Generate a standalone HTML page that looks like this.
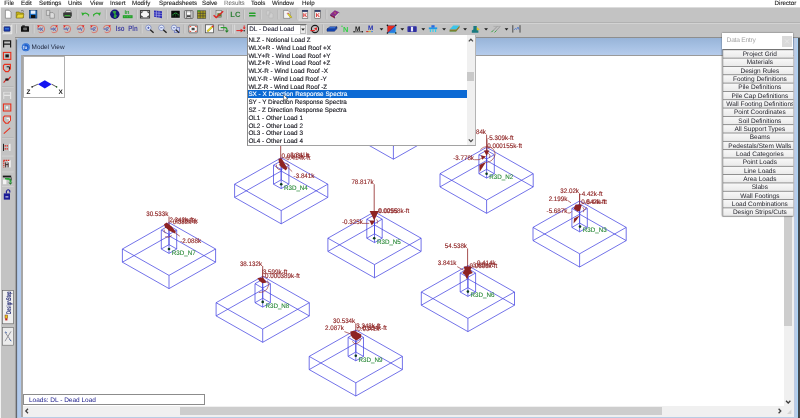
<!DOCTYPE html>
<html lang="en"><head><meta charset="utf-8"><title>Model View</title>
<style>
html,body{margin:0;padding:0}
body{text-rendering:geometricPrecision;width:800px;height:418px;overflow:hidden;position:relative;background:#c3c3c3;font-family:"Liberation Sans",sans-serif;font-size:6.3px;color:#222}
#root{position:absolute;left:0;top:0;width:800px;height:418px;overflow:hidden;will-change:transform}
.abs{position:absolute}
#menubar{left:0;top:0;width:800px;height:7px;background:#fff;overflow:hidden}
#menubar span{position:absolute;top:-0.2px;font-size:6.2px;line-height:8px;color:#2a2a2a;-webkit-text-stroke:0.12px #2a2a2a;white-space:nowrap}
#tb{left:0;top:7px;width:800px;height:30px;background:#c3c3c3}
#tbhi{left:0;top:7px;width:800px;height:1px;background:#dcdcdc}
#tbsep{left:2px;top:21.5px;width:798px;height:1px;background:#b2b2b2}
#tbsep2{left:2px;top:22.5px;width:798px;height:1px;background:#d2d2d2}
#tbshadow{left:15px;top:36.5px;width:785px;height:1.2px;background:#8e8e8e}
#lefttb{left:0;top:37px;width:15.5px;height:381px;background:#c3c3c3}
#leftedge{left:0;top:7px;width:1.2px;height:411px;background:#f2f2f2}
#mdi{left:17.1px;top:37.6px;width:781.2px;height:381px;background:#b2caec;border-radius:2px 0 0 0}
#title{left:17.1px;top:37.6px;width:781.2px;height:17.2px;background:linear-gradient(#98b4d8,#a4bfe2 45%,#b6ccec);border-radius:3px 0 0 0}
#titletxt{left:31.6px;top:43.2px;font-size:6.4px;line-height:9px;color:#1a2238;white-space:nowrap}
#content{left:23px;top:55.6px;width:770.5px;height:361px;background:#fff}
#contenttop{left:22.5px;top:54.7px;width:771px;height:1px;background:#9a9a9a}
#contentleft{left:20.8px;top:54.7px;width:2.2px;height:362.2px;background:#a6a6a6}
#rightdark{left:798.2px;top:37.6px;width:2px;height:381px;background:linear-gradient(90deg,#3c4650,#4c4c4c)}
#rightblue{left:793.8px;top:37.6px;width:4.5px;height:381px;background:linear-gradient(90deg,#c4c8dc 0,#b8cce8 22%,#b8cce8 74%,#a8d4f8 80%,#a8d4f8 100%)}
#bottomblue{left:17.1px;top:416.8px;width:781px;height:2px;background:#b8cce4}
#axes{left:22.6px;top:55.6px;width:40.7px;height:40px;background:#fff;border:0.8px solid #b0b0b0}
#status{left:23.4px;top:394.3px;width:182px;height:11.1px;background:#fff;border:0.8px solid #8c8c8c;box-sizing:border-box}
#status span{position:absolute;left:4.6px;top:2.2px;font-size:6.5px;line-height:8px;color:#20208c;white-space:nowrap}
#hscroll{left:23px;top:406.2px;width:771px;height:10.6px;background:#f0f0f0}
#hthumb{left:180.4px;top:406.9px;width:481.6px;height:7.9px;background:#cdcdcd}
#vscroll{left:784.2px;top:55.6px;width:9.6px;height:361px;background:#f0f0f0}
#vthumb{left:784.2px;top:63px;width:8.2px;height:263px;background:#cdcdcd}
#dd{left:246.6px;top:35.2px;width:229.2px;height:110.4px;background:#fff;border-left:0.8px solid #8a8a8a;border-right:1px solid #b4b4b4;border-top:0 solid #fff;border-bottom:1px solid #a2a2a2;box-sizing:border-box;overflow:hidden}
#dd .it{position:absolute;left:0.6px;width:218.8px;height:7.8px;line-height:9.6px;font-size:6.34px;color:#14141c;-webkit-text-stroke:0.12px #14141c;overflow:hidden;white-space:nowrap;padding-left:0.2px;box-sizing:border-box}
#dd .sel{background:#0c6ad4;color:#fff;-webkit-text-stroke:0.12px #fff}
#ddsb{left:467px;top:35.4px;width:7.8px;height:109.2px;background:#f0f0f0}
#ddth{left:467px;top:72px;width:7px;height:9px;background:#c9c9c9}
#combo{left:246.8px;top:24.2px;width:60.2px;height:10.6px;background:#fff;border-top:1px solid #6e6e6e;border-left:1px solid #6e6e6e;border-bottom:0.6px solid #e8e8e8;border-right:0.6px solid #e8e8e8;box-sizing:border-box}
#combo span{position:absolute;left:1.4px;top:1.2px;font-size:6.4px;line-height:8px;color:#1c1c30;-webkit-text-stroke:0.1px #1c1c30;white-space:nowrap}
#combobtn{left:299.8px;top:25.4px;width:6.4px;height:8.6px;background:#ececec;border:0.5px solid #bdbdbd;box-sizing:border-box}
#deshadow{left:722px;top:32.8px;width:71.4px;height:183.6px;box-shadow:0 0 1.6px rgba(0,0,0,.55)}
#de{left:721.8px;top:32.7px;width:71.6px;height:16.4px;background:#fff}
#de span{position:absolute;left:4.8px;top:4.6px;font-size:6.7px;letter-spacing:-0.27px;line-height:8px;color:#a4a4a4;white-space:nowrap}
#declose{left:781.8px;top:36px;width:10.4px;height:10.8px;background:#dadada}
#debtns{left:722.4px;top:49.4px;width:71px;height:167px;overflow:hidden}
#debtns div{position:absolute;left:0.9px;width:70.1px;height:8.3px;font-size:6.5px;line-height:9.6px;text-align:center;color:#26262e;white-space:nowrap;overflow:hidden;box-sizing:border-box;padding-left:3px}
svg{position:absolute;left:0;top:0;overflow:hidden}
svg text{font-family:"Liberation Sans",sans-serif;text-rendering:geometricPrecision}
</style></head>
<body>
<div id="root">
<div id="menubar" class="abs"><span style="left:4.3px">File</span><span style="left:21px">Edit</span><span style="left:39px">Settings</span><span style="left:68px">Units</span><span style="left:90px">View</span><span style="left:110px">Insert</span><span style="left:132px">Modify</span><span style="left:159px">Spreadsheets</span><span style="left:202px">Solve</span><span style="left:224px;color:#aaa">Results</span><span style="left:251px">Tools</span><span style="left:272px">Window</span><span style="left:302px">Help</span><span style="left:774.6px">Director</span></div>
<div id="tb" class="abs"></div><div id="tbhi" class="abs"></div><div id="tbsep" class="abs"></div><div id="tbsep2" class="abs"></div>
<div id="lefttb" class="abs"></div><div id="leftedge" class="abs"></div>
<div id="mdi" class="abs"></div><div id="title" class="abs"></div>
<div id="tbshadow" class="abs"></div>
<div id="titletxt" class="abs">Model View</div>
<div id="content" class="abs"></div><div id="contenttop" class="abs"></div><div id="contentleft" class="abs"></div>
<div id="rightblue" class="abs"></div><div id="rightdark" class="abs"></div>
<div id="axes" class="abs"></div>
<div id="vscroll" class="abs"></div><div id="vthumb" class="abs"></div>
<div id="hscroll" class="abs"></div><div id="hthumb" class="abs"></div>
<div id="bottomblue" class="abs"></div>
<div id="status" class="abs"><span>Loads: DL - Dead Load</span></div>
<svg width="800" height="418" viewBox="0 0 800 418">
<g><path d="M37.9 84.3L44.8 80.2L51.7 84.3L44.8 88.4Z" fill="#1414f0"/><path d="M37.9 84.2L32.2 86.8M51.7 84.2L56.4 86.8" stroke="#111" stroke-width="0.7" fill="none"/><circle cx="32.1" cy="86.9" r="0.8" fill="#111"/><circle cx="56.6" cy="86.9" r="0.8" fill="#1c5c1c"/><text x="26.6" y="94" font-size="6.4" font-weight="bold" fill="#222">Z</text><text x="58.5" y="94" font-size="6.4" font-weight="bold" fill="#222">X</text></g>
<g><path d="M393.4 93.2 L440 119.6 L393.4 146 L346.8 119.6Z M393.4 106.4 L440 132.8 L393.4 159.2 L346.8 132.8Z M393.4 93.2V106.4 M440 119.6V132.8 M393.4 146V159.2 M346.8 119.6V132.8 M393.4 115.2 L401.1 119.6 L393.4 124 L385.7 119.6Z M393.4 96.2 L401.1 100.6 L393.4 105 L385.7 100.6Z M393.4 115.2V96.2 M401.1 119.6V100.6 M393.4 124V105 M385.7 119.6V100.6 " fill="none" stroke="#4444e2" stroke-width="0.75"/></g>
<g><path d="M281.2 157.8 L327.8 184.2 L281.2 210.6 L234.6 184.2Z M281.2 171 L327.8 197.4 L281.2 223.8 L234.6 197.4Z M281.2 157.8V171 M327.8 184.2V197.4 M281.2 210.6V223.8 M234.6 184.2V197.4 M281.2 179.8 L288.9 184.2 L281.2 188.6 L273.5 184.2Z M281.2 160.8 L288.9 165.2 L281.2 169.6 L273.5 165.2Z M281.2 179.8V160.8 M288.9 184.2V165.2 M281.2 188.6V169.6 M273.5 184.2V165.2 " fill="none" stroke="#4444e2" stroke-width="0.75"/></g>
<g><path d="M486.6 147.3 L533.2 173.7 L486.6 200.1 L440 173.7Z M486.6 160.5 L533.2 186.9 L486.6 213.3 L440 186.9Z M486.6 147.3V160.5 M533.2 173.7V186.9 M486.6 200.1V213.3 M440 173.7V186.9 M486.6 169.3 L494.3 173.7 L486.6 178.1 L478.9 173.7Z M486.6 150.3 L494.3 154.7 L486.6 159.1 L478.9 154.7Z M486.6 169.3V150.3 M494.3 173.7V154.7 M486.6 178.1V159.1 M478.9 173.7V154.7 " fill="none" stroke="#4444e2" stroke-width="0.75"/></g>
<g><path d="M169 222.6 L215.6 249 L169 275.4 L122.4 249Z M169 235.8 L215.6 262.2 L169 288.6 L122.4 262.2Z M169 222.6V235.8 M215.6 249V262.2 M169 275.4V288.6 M122.4 249V262.2 M169 244.6 L176.7 249 L169 253.4 L161.3 249Z M169 225.6 L176.7 230 L169 234.4 L161.3 230Z M169 244.6V225.6 M176.7 249V230 M169 253.4V234.4 M161.3 249V230 " fill="none" stroke="#4444e2" stroke-width="0.75"/></g>
<g><path d="M374.5 211.8 L421.1 238.2 L374.5 264.6 L327.9 238.2Z M374.5 225 L421.1 251.4 L374.5 277.8 L327.9 251.4Z M374.5 211.8V225 M421.1 238.2V251.4 M374.5 264.6V277.8 M327.9 238.2V251.4 M374.5 233.8 L382.2 238.2 L374.5 242.6 L366.8 238.2Z M374.5 214.8 L382.2 219.2 L374.5 223.6 L366.8 219.2Z M374.5 233.8V214.8 M382.2 238.2V219.2 M374.5 242.6V223.6 M366.8 238.2V219.2 " fill="none" stroke="#4444e2" stroke-width="0.75"/></g>
<g><path d="M579.6 201 L626.2 227.4 L579.6 253.8 L533 227.4Z M579.6 214.2 L626.2 240.6 L579.6 267 L533 240.6Z M579.6 201V214.2 M626.2 227.4V240.6 M579.6 253.8V267 M533 227.4V240.6 M579.6 223 L587.3 227.4 L579.6 231.8 L571.9 227.4Z M579.6 204 L587.3 208.4 L579.6 212.8 L571.9 208.4Z M579.6 223V204 M587.3 227.4V208.4 M579.6 231.8V212.8 M571.9 227.4V208.4 " fill="none" stroke="#4444e2" stroke-width="0.75"/></g>
<g><path d="M262.7 276.3 L309.3 302.7 L262.7 329.1 L216.1 302.7Z M262.7 289.5 L309.3 315.9 L262.7 342.3 L216.1 315.9Z M262.7 276.3V289.5 M309.3 302.7V315.9 M262.7 329.1V342.3 M216.1 302.7V315.9 M262.7 298.3 L270.4 302.7 L262.7 307.1 L255 302.7Z M262.7 279.3 L270.4 283.7 L262.7 288.1 L255 283.7Z M262.7 298.3V279.3 M270.4 302.7V283.7 M262.7 307.1V288.1 M255 302.7V283.7 " fill="none" stroke="#4444e2" stroke-width="0.75"/></g>
<g><path d="M467.9 265.6 L514.5 292 L467.9 318.4 L421.3 292Z M467.9 278.8 L514.5 305.2 L467.9 331.6 L421.3 305.2Z M467.9 265.6V278.8 M514.5 292V305.2 M467.9 318.4V331.6 M421.3 292V305.2 M467.9 287.6 L475.6 292 L467.9 296.4 L460.2 292Z M467.9 268.6 L475.6 273 L467.9 277.4 L460.2 273Z M467.9 287.6V268.6 M475.6 292V273 M467.9 296.4V277.4 M460.2 292V273 " fill="none" stroke="#4444e2" stroke-width="0.75"/></g>
<g><path d="M355.8 330 L402.4 356.4 L355.8 382.8 L309.2 356.4Z M355.8 343.2 L402.4 369.6 L355.8 396 L309.2 369.6Z M355.8 330V343.2 M402.4 356.4V369.6 M355.8 382.8V396 M309.2 356.4V369.6 M355.8 352 L363.5 356.4 L355.8 360.8 L348.1 356.4Z M355.8 333 L363.5 337.4 L355.8 341.8 L348.1 337.4Z M355.8 352V333 M363.5 356.4V337.4 M355.8 360.8V341.8 M348.1 356.4V337.4 " fill="none" stroke="#4444e2" stroke-width="0.75"/></g>
<g><circle cx="393.4" cy="120.4" r="1.3" fill="#0d3d1c"/><text transform="translate(396.1 126.1) scale(.947 1)" font-size="6.6" fill="#2c8a3a" stroke="#2c8a3a" stroke-width=".12">R3D_N1</text></g>
<g><circle cx="281.2" cy="184.2" r="1.3" fill="#0d3d1c"/><text transform="translate(283.9 189.9) scale(.947 1)" font-size="6.6" fill="#2c8a3a" stroke="#2c8a3a" stroke-width=".12">R3D_N4</text></g>
<g><circle cx="486.6" cy="173.7" r="1.3" fill="#0d3d1c"/><text transform="translate(489.3 179.4) scale(.947 1)" font-size="6.6" fill="#2c8a3a" stroke="#2c8a3a" stroke-width=".12">R3D_N2</text></g>
<g><circle cx="169" cy="249" r="1.3" fill="#0d3d1c"/><text transform="translate(171.7 254.7) scale(.947 1)" font-size="6.6" fill="#2c8a3a" stroke="#2c8a3a" stroke-width=".12">R3D_N7</text></g>
<g><circle cx="374.2" cy="238.2" r="1.3" fill="#0d3d1c"/><text transform="translate(376.9 243.9) scale(.947 1)" font-size="6.6" fill="#2c8a3a" stroke="#2c8a3a" stroke-width=".12">R3D_N5</text></g>
<g><circle cx="580" cy="226.6" r="1.3" fill="#0d3d1c"/><text transform="translate(582.7 232.3) scale(.947 1)" font-size="6.6" fill="#2c8a3a" stroke="#2c8a3a" stroke-width=".12">R3D_N3</text></g>
<g><circle cx="262.7" cy="301.9" r="1.3" fill="#0d3d1c"/><text transform="translate(265.4 307.6) scale(.947 1)" font-size="6.6" fill="#2c8a3a" stroke="#2c8a3a" stroke-width=".12">R3D_N8</text></g>
<g><circle cx="467.9" cy="291.6" r="1.3" fill="#0d3d1c"/><text transform="translate(470.6 297.3) scale(.947 1)" font-size="6.6" fill="#2c8a3a" stroke="#2c8a3a" stroke-width=".12">R3D_N6</text></g>
<g><circle cx="355.8" cy="355.8" r="1.3" fill="#0d3d1c"/><text transform="translate(358.5 361.5) scale(.947 1)" font-size="6.6" fill="#2c8a3a" stroke="#2c8a3a" stroke-width=".12">R3D_N9</text></g>
<path d="M393.4 66.4V96" stroke="#8e2323" stroke-width="0.8" fill="none"/><path d="M388.9 93.2H397.9L393.4 102.6Z" fill="#8e2323"/><text transform="translate(392.8 66.2) scale(.947 1)" font-size="6.6" fill="#8e2323" stroke="#8e2323" stroke-width=".14" text-anchor="end">78.817k</text>
<path d="M280.7 141V161.8" stroke="#8e2323" stroke-width="0.8" fill="none"/><text transform="translate(280.1 140.8) scale(.947 1)" font-size="6.6" fill="#8e2323" stroke="#8e2323" stroke-width=".14" text-anchor="end">54.538k</text>
<text transform="translate(281.6 158.4) scale(.947 1)" font-size="6.6" fill="#8e2323" stroke="#8e2323" stroke-width=".14" text-anchor="start">0.0603k-ft</text>
<text transform="translate(284.2 160) scale(.947 1)" font-size="6.6" fill="#8e2323" stroke="#8e2323" stroke-width=".14" text-anchor="start" opacity="0.85">-0.414k-ft</text>
<text transform="translate(290.2 157.4) scale(.947 1)" font-size="6.6" fill="#8e2323" stroke="#8e2323" stroke-width=".14" text-anchor="start" opacity="0.8">3.841k</text>
<path d="M278.4 158.8 L281.6 158.2 L287.4 168.2 L285.8 170.4 L282 167.6 L279 162.6Z" fill="#8e2323"/>
<path d="M278.6 164.4 L283.2 163.2 L282.2 168Z" fill="#8e2323" opacity="0.9"/>
<path d="M276.4 164.6q-.6 4.2 3.600 5.200M287 166.600l5.200 5.000M285.600 163.600q2.800-.200 3.400 2.200" stroke="#8e2323" stroke-width="0.65" fill="none"/>
<text transform="translate(293.6 178.4) scale(.947 1)" font-size="6.6" fill="#8e2323" stroke="#8e2323" stroke-width=".14" text-anchor="start">-3.841k</text>
<path d="M486.6 134.6V152" stroke="#8e2323" stroke-width="0.8" fill="none"/><path d="M483.9 150.4H489.3L486.6 155.9Z" fill="#8e2323"/><text transform="translate(486 134.4) scale(.947 1)" font-size="6.6" fill="#8e2323" stroke="#8e2323" stroke-width=".14" text-anchor="end">45.484k</text>
<text transform="translate(487.2 140.3) scale(.947 1)" font-size="6.6" fill="#8e2323" stroke="#8e2323" stroke-width=".14" text-anchor="start">-5.309k-ft</text>
<text transform="translate(487.2 147.7) scale(.947 1)" font-size="6.6" fill="#8e2323" stroke="#8e2323" stroke-width=".14" text-anchor="start">0.000155k-ft</text>
<text transform="translate(474 159.9) scale(.947 1)" font-size="6.6" fill="#8e2323" stroke="#8e2323" stroke-width=".14" text-anchor="end">-3.778k</text>
<path d="M474.2 159.7H479l3-1.6" stroke="#8e2323" stroke-width="0.65" fill="none"/>
<path d="M481 155.3 L486 156.5 L482.2 159.7Z" fill="#8e2323"/>
<path d="M480.4 149.5q5.6-5.400 12.400-.800q5 5.600-.800 11.400q-2.400 2.200-5.600 2.400" stroke="#8e2323" stroke-width="0.6" fill="none"/>
<path d="M488 153.1q3.400 1.600 1.400 4.800" stroke="#8e2323" stroke-width="0.6" fill="none"/>
<path d="M486.2 161.7 L479.6 172.1 L479.4 165.1Z" fill="#8e2323"/>
<path d="M487.1 139.1V151.7" stroke="#8e2323" stroke-width="0.6" fill="none"/>
<path d="M169 216.5V228.5" stroke="#8e2323" stroke-width="0.8" fill="none"/><path d="M167.2 227.4H170.8L169 231.2Z" fill="#8e2323"/><text transform="translate(168.4 216.3) scale(.947 1)" font-size="6.6" fill="#8e2323" stroke="#8e2323" stroke-width=".14" text-anchor="end">30.533k</text>
<text transform="translate(169.4 222.2) scale(.947 1)" font-size="6.6" fill="#8e2323" stroke="#8e2323" stroke-width=".14" text-anchor="start">2.342k-ft</text>
<text transform="translate(170.6 224.2) scale(.947 1)" font-size="6.6" fill="#8e2323" stroke="#8e2323" stroke-width=".14" text-anchor="start" opacity="0.9">-0.332k-ft</text>
<text transform="translate(176 223.4) scale(.947 1)" font-size="6.6" fill="#8e2323" stroke="#8e2323" stroke-width=".14" text-anchor="start" opacity="0.75">0.2088k</text>
<path d="M164 224.2 L166.6 222.6 L171.6 226.6 L175.8 231.6 L175 233.6 L170 231 L165 227.2Z" fill="#8e2323"/>
<path d="M175.200 233l4.600 3.200M165.200 236.800q3.600 1.400 6.600-1.200M164.200 229.600q-.800 2.400 1.600 3.800" stroke="#8e2323" stroke-width="0.65" fill="none"/>
<text transform="translate(180.2 242.8) scale(.947 1)" font-size="6.6" fill="#8e2323" stroke="#8e2323" stroke-width=".14" text-anchor="start">-2.088k</text>
<path d="M374.2 184.2V213.8" stroke="#8e2323" stroke-width="0.8" fill="none"/><path d="M369.7 211H378.7L374.2 220.4Z" fill="#8e2323"/><text transform="translate(373.6 184) scale(.947 1)" font-size="6.6" fill="#8e2323" stroke="#8e2323" stroke-width=".14" text-anchor="end">78.817k</text>
<text transform="translate(378 213) scale(.947 1)" font-size="6.6" fill="#8e2323" stroke="#8e2323" stroke-width=".14" text-anchor="start">0.00958k-ft</text>
<text transform="translate(376.6 213) scale(.947 1)" font-size="6.6" fill="#8e2323" stroke="#8e2323" stroke-width=".14" text-anchor="start" opacity="0.8">-0.0256</text>
<text transform="translate(362.8 224) scale(.947 1)" font-size="6.6" fill="#8e2323" stroke="#8e2323" stroke-width=".14" text-anchor="end">-0.325k</text>
<path d="M362.8 223.4H369.2" stroke="#8e2323" stroke-width="0.65" fill="none"/>
<path d="M369.4 220.6 L375.2 220.4 L371.8 225.6Z" fill="#8e2323"/>
<path d="M376.6 219.4q2.200 1.800 .400 4.400" stroke="#8e2323" stroke-width="0.6" fill="none"/>
<path d="M579.6 193.4V206" stroke="#8e2323" stroke-width="0.8" fill="none"/><text transform="translate(579 193.2) scale(.947 1)" font-size="6.6" fill="#8e2323" stroke="#8e2323" stroke-width=".14" text-anchor="end">32.02k</text>
<text transform="translate(579.6 196.4) scale(.947 1)" font-size="6.6" fill="#8e2323" stroke="#8e2323" stroke-width=".14" text-anchor="start">-4.42k-ft</text>
<text transform="translate(581.2 203.6) scale(.947 1)" font-size="6.6" fill="#8e2323" stroke="#8e2323" stroke-width=".14" text-anchor="start">0.642k-ft</text>
<text transform="translate(584 204.4) scale(.947 1)" font-size="6.6" fill="#8e2323" stroke="#8e2323" stroke-width=".14" text-anchor="start" opacity="0.85">-0.44k-ft</text>
<text transform="translate(567.4 200.6) scale(.947 1)" font-size="6.6" fill="#8e2323" stroke="#8e2323" stroke-width=".14" text-anchor="end">2.199k</text>
<text transform="translate(567.4 213.2) scale(.947 1)" font-size="6.6" fill="#8e2323" stroke="#8e2323" stroke-width=".14" text-anchor="end">-5.687k</text>
<path d="M567.6 200.4l3.400 2.400M567.6 213h2.600l1.600-1.600" stroke="#8e2323" stroke-width="0.65" fill="none"/>
<path d="M575.6 204.6 L581.8 204.8 L580 210.8 L577.6 211.6 L573.6 208.8Z" fill="#8e2323"/>
<path d="M573.6 223.4 L574 218.4 L579.6 215.6 L577 219.6Z" fill="#8e2323"/>
<path d="M582.800 207.200q2.200 1.600 .600 5.000M584.600 209.800l2-2.600M579.600 193.600V201" stroke="#8e2323" stroke-width="0.6" fill="none"/>
<path d="M262.7 266V280.8" stroke="#8e2323" stroke-width="0.8" fill="none"/><text transform="translate(262.1 265.8) scale(.947 1)" font-size="6.6" fill="#8e2323" stroke="#8e2323" stroke-width=".14" text-anchor="end">38.132k</text>
<text transform="translate(262.9 273.9) scale(.947 1)" font-size="6.6" fill="#8e2323" stroke="#8e2323" stroke-width=".14" text-anchor="start">3.599k-ft</text>
<text transform="translate(262.9 277.5) scale(.947 1)" font-size="6.6" fill="#8e2323" stroke="#8e2323" stroke-width=".14" text-anchor="start">-0.000389k-ft</text>
<path d="M257.4 278 L263 277.6 L266.8 282.4 L262.6 283.2 L259.4 281Z" fill="#8e2323"/>
<path d="M267.600 280.600q2.400 5.200-.800 8.800q-3.200 3.400-8 3.200" stroke="#8e2323" stroke-width="0.6" fill="none"/>
<path d="M262.600 269.400V278" stroke="#8e2323" stroke-width="0.6" fill="none"/>
<path d="M467.6 248.4V269.2" stroke="#8e2323" stroke-width="0.8" fill="none"/><path d="M464.4 267.2H470.8L467.6 273.8Z" fill="#8e2323"/><text transform="translate(467 248.2) scale(.947 1)" font-size="6.6" fill="#8e2323" stroke="#8e2323" stroke-width=".14" text-anchor="end">54.538k</text>
<text transform="translate(456.5 265.2) scale(.947 1)" font-size="6.6" fill="#8e2323" stroke="#8e2323" stroke-width=".14" text-anchor="end">3.841k</text>
<text transform="translate(476.9 264.8) scale(.947 1)" font-size="6.6" fill="#8e2323" stroke="#8e2323" stroke-width=".14" text-anchor="start">0.414k</text>
<text transform="translate(469.5 268.2) scale(.947 1)" font-size="6.6" fill="#8e2323" stroke="#8e2323" stroke-width=".14" text-anchor="start">0.0603k-ft</text>
<text transform="translate(470.3 267.2) scale(.947 1)" font-size="6.6" fill="#8e2323" stroke="#8e2323" stroke-width=".14" text-anchor="start" opacity="0.8">-3.65k-ft</text>
<path d="M457.200 266.600l6.400 3.600" stroke="#8e2323" stroke-width="0.65" fill="none"/>
<path d="M463.8 266.6 L471.6 266.6 L470.6 270 L472.8 273 L469 274.4 L467 279.6 L465 275 L462.4 273 L464.6 270Z" fill="#8e2323"/>
<path d="M355.8 323.3V335.3" stroke="#8e2323" stroke-width="0.8" fill="none"/><text transform="translate(355.2 323.1) scale(.947 1)" font-size="6.6" fill="#8e2323" stroke="#8e2323" stroke-width=".14" text-anchor="end">30.534k</text>
<text transform="translate(343.8 330.2) scale(.947 1)" font-size="6.6" fill="#8e2323" stroke="#8e2323" stroke-width=".14" text-anchor="end">2.087k</text>
<text transform="translate(356.2 327.6) scale(.947 1)" font-size="6.6" fill="#8e2323" stroke="#8e2323" stroke-width=".14" text-anchor="start">3.342k-ft</text>
<text transform="translate(360.4 330) scale(.947 1)" font-size="6.6" fill="#8e2323" stroke="#8e2323" stroke-width=".14" text-anchor="start">-0.334k-ft</text>
<text transform="translate(357.2 331.4) scale(.947 1)" font-size="6.6" fill="#8e2323" stroke="#8e2323" stroke-width=".14" text-anchor="start" opacity="0.8">0.0341k</text>
<path d="M344.400 331.600l5.800 2.200" stroke="#8e2323" stroke-width="0.65" fill="none"/>
<path d="M350.4 331.6 L354 330.8 L361.4 334.4 L361 337.6 L356.4 340.6 L352.6 338 L350.6 335Z" fill="#8e2323"/>
<path d="M352.400 341.200q1.400 3.400 4.200 2.400q3.800-1.400 4.600-4.800" stroke="#8e2323" stroke-width="0.6" fill="none"/>
</svg>
<svg width="800" height="418" viewBox="0 0 800 418">
<g><path d="M5.4 10.2h3.6l2 2v6H5.4z" fill="#fff" stroke="#666" stroke-width="0.6"/><path d="M16.2 12h3l.8.9h3.4v5H16.2z" fill="#c8b414" stroke="#5a5208" stroke-width="0.5"/><path d="M17.6 14.2h6.4l-1.2 3.7h-6.6z" fill="#e6d53a" stroke="#5a5208" stroke-width="0.4"/><path d="M21 10.8q2-1 3 .8" stroke="#333" stroke-width="0.5" fill="none"/><rect x="29.3" y="10.3" width="7.6" height="7.8" fill="#1f6fc0" stroke="#0d2f5c" stroke-width="0.6"/><rect x="30.8" y="10.6" width="4.6" height="3.2" fill="#e8f0fa"/><rect x="31" y="15" width="4.4" height="3" fill="#111"/><path d="M42 9.5V19.5" stroke="#a8a8a8" stroke-width="0.7"/><path d="M42.8 9.5V19.5" stroke="#dedede" stroke-width="0.7"/><path d="M46.4 10.4h3.4v5h-3.4z" fill="#d8d8d8" stroke="#6a6a6a" stroke-width="0.5"/><path d="M50 12.6h3l1.4 1.4v4.2H50z" fill="#dcdcdc" stroke="#6a6a6a" stroke-width="0.5"/><path d="M59 9.5V19.5" stroke="#a8a8a8" stroke-width="0.7"/><path d="M59.8 9.5V19.5" stroke="#dedede" stroke-width="0.7"/><path d="M65 12.6l1.4-2.2h4l1 2.2z" fill="#e8e8e8" stroke="#333" stroke-width="0.5"/><rect x="63.2" y="12.6" width="8.6" height="4.2" rx="0.8" fill="#3a3a3a"/><rect x="64.6" y="15.2" width="5.6" height="1" fill="#3cc83c"/><rect x="64.2" y="16.8" width="6.6" height="1.2" fill="#222"/><path d="M77 9.5V19.5" stroke="#a8a8a8" stroke-width="0.7"/><path d="M77.8 9.5V19.5" stroke="#dedede" stroke-width="0.7"/><path d="M82.2 14.6q3.4-3.4 6.6 .6" stroke="#2fae2f" stroke-width="1.2" fill="none"/><path d="M81.2 12.6l3.2.4-1.6 2.9z" fill="#2fae2f"/><path d="M88.6 14.4v2" stroke="#2fae2f" stroke-width="0.9"/><path d="M100 14.6q-3.4-3.4-6.6 .6" stroke="#2fae2f" stroke-width="1.2" fill="none"/><path d="M101 12.6l-3.2.4 1.6 2.9z" fill="#2fae2f"/><path d="M93.6 14.4v2" stroke="#2fae2f" stroke-width="0.9"/><path d="M105.4 9.5V19.5" stroke="#a8a8a8" stroke-width="0.7"/><path d="M106.2 9.5V19.5" stroke="#dedede" stroke-width="0.7"/><circle cx="114.8" cy="14.2" r="4.7" fill="#141478"/><path d="M112.4 11.6q2.4-1.6 4 .2l-1 2.2 1.6 1.4-1.2 2.6q-2 .4-2.2-1.6l.8-1.8z" fill="#2e9e3e"/><text x="124.4" y="14.4" font-size="5.6" font-weight="bold" fill="#25a02b" font-family="Liberation Sans,sans-serif">In</text><rect x="122.8" y="15.2" width="9.8" height="3" fill="#25a02b"/><path d="M124 16.7h7.4" stroke="#8fe08f" stroke-width="0.5" stroke-dasharray="0.8 0.8"/><path d="M136.4 9.5V19.5" stroke="#a8a8a8" stroke-width="0.7"/><path d="M137.20000000000002 9.5V19.5" stroke="#dedede" stroke-width="0.7"/><rect x="140.4" y="10.6" width="9.2" height="7.4" fill="#f4f4f4" stroke="#2a2a2a" stroke-width="0.9"/><path d="M141.2 11.4h2.2l-2.2 2zM148.8 11.4h-2.2l2.2 2zM141.2 17.2h2.2l-2.2-2zM148.8 17.2h-2.2l2.2-2z" fill="#222"/><path d="M154 10.4l8 .8v7l-8-1.4z" fill="#2c2cb4"/><path d="M156.4 10.8v6.6M159 11v6.8M154 12.8l8 .6M154 15l8 .8" stroke="#c9c9f2" stroke-width="0.5"/><path d="M166.4 9.5V19.5" stroke="#a8a8a8" stroke-width="0.7"/><path d="M167.20000000000002 9.5V19.5" stroke="#dedede" stroke-width="0.7"/><rect x="171" y="10.4" width="9" height="7.6" fill="#0a0a0a" stroke="#eee" stroke-width="0.4"/><path d="M172.4 15.2q3.2-4.4 6.4 0" stroke="#2fc04a" stroke-width="0.8" fill="none"/><path d="M173 15v1.6M175.600 14v2.600M178.200 15v1.600" stroke="#1f7a30" stroke-width="0.5"/><rect x="184.400" y="10.6" width="8.6" height="7.8" rx="0.8" fill="#d8d8d8" stroke="#444" stroke-width="0.7"/><path d="M186.6 10.8v7.400M190.800 10.800v7.400" stroke="#444" stroke-width="0.6"/><rect x="187" y="12.6" width="3.400" height="1.8" fill="#fff"/><rect x="187" y="15.4" width="3.400" height="1.400" fill="#222"/><rect x="197.400" y="10.800" width="8.400" height="7.600" fill="#a89c1c" stroke="#333" stroke-width="0.5"/><path d="M200.200 10.800v7.600M203 10.800v7.600M197.400 13.400h8.400M197.400 15.900h8.400" stroke="#3a3a3a" stroke-width="0.6"/><rect x="197.600" y="10.400" width="2.400" height="1.200" fill="#2aa02a"/><path d="M209.6 9.5V19.5" stroke="#a8a8a8" stroke-width="0.7"/><path d="M210.4 9.5V19.5" stroke="#dedede" stroke-width="0.7"/><rect x="216" y="10.400" width="5.600" height="6.800" fill="#d9d9d9" stroke="#555" stroke-width="0.5"/><rect x="217.400" y="13.200" width="3.800" height="3.400" fill="#5a7a2a"/><path d="M213.600 15.200l2.600 2.400 7-6.400" stroke="#e02222" stroke-width="1.300" fill="none"/><path d="M226.6 9.5V19.5" stroke="#a8a8a8" stroke-width="0.7"/><path d="M227.4 9.5V19.5" stroke="#dedede" stroke-width="0.7"/><text x="230.300" y="17" font-size="7.600" font-weight="bold" fill="#2c7e34" font-family="Liberation Sans,sans-serif">LC</text><path d="M243.6 9.5V19.5" stroke="#a8a8a8" stroke-width="0.7"/><path d="M244.4 9.5V19.5" stroke="#dedede" stroke-width="0.7"/><rect x="249" y="12.600" width="6.600" height="1.500" rx="0.400" fill="#25a02b"/><rect x="249" y="15.100" width="6.600" height="1.500" rx="0.400" fill="#25a02b"/><path d="M260.4 9.5V19.5" stroke="#a8a8a8" stroke-width="0.7"/><path d="M261.2 9.5V19.5" stroke="#dedede" stroke-width="0.7"/><path d="M266.400 10.800h3.400v4.200h-3.400zM269 13h3l1 1v4h-4z" fill="#cfcfcf" stroke="#b2b2b2" stroke-width="0.500"/><path d="M278 9.5V19.5" stroke="#a8a8a8" stroke-width="0.7"/><path d="M278.8 9.5V19.5" stroke="#dedede" stroke-width="0.7"/><path d="M283.600 10.400h4.400l2 2v6h-6.400z" fill="#f4f4f4" stroke="#6a6a6a" stroke-width="0.600"/><path d="M286.400 13.400l1.800-1 .9 1.400z" fill="#d42a2a"/><path d="M287.600 14.400l3.400 3.600 1-.8-3.200-3.800z" fill="#e8d81c" stroke="#6a6410" stroke-width="0.300"/><path d="M296.4 9.5V19.5" stroke="#a8a8a8" stroke-width="0.7"/><path d="M297.2 9.5V19.5" stroke="#dedede" stroke-width="0.7"/><rect x="298.400" y="8.200" width="12.600" height="12" fill="#d3d3d3"/><path d="M298.400 20.200h12.600" stroke="#eee" stroke-width="0.600"/><rect x="302.200" y="10.200" width="5.600" height="8.200" fill="#f0ecec" stroke="#444" stroke-width="0.500"/><rect x="302.200" y="10.200" width="5.600" height="1.600" fill="#1c2a5c"/><text x="303.100" y="17.400" font-size="5.600" font-weight="bold" fill="#d22" font-family="Liberation Sans,sans-serif">K</text><rect x="314.800" y="10.200" width="5.600" height="8.200" fill="#f0ecec" stroke="#444" stroke-width="0.500"/><rect x="314.800" y="10.200" width="5.600" height="1.600" fill="#1c2a5c"/><text x="315.700" y="17.400" font-size="5.600" font-weight="bold" fill="#d22" font-family="Liberation Sans,sans-serif">K</text><path d="M326 9.5V19.5" stroke="#a8a8a8" stroke-width="0.7"/><path d="M326.8 9.5V19.5" stroke="#dedede" stroke-width="0.7"/><path d="M330.200 14.200l4.600-4 4.600 2-4.400 4.400z" fill="#8c2a8c"/><path d="M330.200 14.200l4.800 2.400v1.800l-4.800-2.600z" fill="#5a1a5a"/><path d="M335 16.600l4.400-4.400v1.600l-4.400 4.600z" fill="#e8e4e4" stroke="#777" stroke-width="0.300"/><path d="M333.600 13l1.800-.6.400 1.200z" fill="#e8c020"/><path d="M331.400 16l3 1.600" stroke="#d22" stroke-width="0.600"/></g>
<g><rect x="2.200" y="24.200" width="9.600" height="9.600" fill="#d6d6d6"/><path d="M2.200 33.800h9.600v-9.600" stroke="#f4f4f4" stroke-width="0.700" fill="none"/><path d="M2.200 33.800v-9.600h9.600" stroke="#9a9a9a" stroke-width="0.500" fill="none"/><rect x="4.000" y="26.800" width="6.000" height="4.400" rx="0.400" fill="#1c3cb4" stroke="#0a1a5a" stroke-width="0.600"/><path d="M5.000 28.800h4.000" stroke="#3a8ae0" stroke-width="1.000"/><path d="M15.6 24.5V33.5" stroke="#a8a8a8" stroke-width="0.7"/><path d="M16.4 24.5V33.5" stroke="#dedede" stroke-width="0.7"/><rect x="21" y="26.200" width="8" height="5.600" rx="0.600" fill="#111"/><rect x="22.200" y="25.400" width="2.600" height="1.200" fill="#111"/><rect x="23.200" y="27.600" width="3.800" height="2.600" rx="0.600" fill="#6a6a6a"/><path d="M33.2 24.5V33.5" stroke="#a8a8a8" stroke-width="0.7"/><path d="M34.0 24.5V33.5" stroke="#dedede" stroke-width="0.7"/><circle cx="41" cy="29" r="3.700" fill="none" stroke="#e8503e" stroke-width="0.650" stroke-dasharray="19.5 3.8" stroke-dashoffset="-12"/><path d="M37.6 29h3.600" stroke="#1c2ca0" stroke-width="0.800"/><text x="40.1" y="31" font-size="5" fill="#2a34a8" font-family="Liberation Sans,sans-serif">X</text><path d="M37.2 25.200l2.600.400-1.600 1.800z" fill="#e02020"/><circle cx="54" cy="29" r="3.700" fill="none" stroke="#e8503e" stroke-width="0.650" stroke-dasharray="19.5 3.8" stroke-dashoffset="-12"/><path d="M50.6 29h3.600" stroke="#1c2ca0" stroke-width="0.800"/><text x="53.1" y="31" font-size="5" fill="#2a34a8" font-family="Liberation Sans,sans-serif">X</text><path d="M57.8 25.200l-2.600.400 1.600 1.800z" fill="#e02020"/><circle cx="67" cy="29" r="3.700" fill="none" stroke="#e8503e" stroke-width="0.650" stroke-dasharray="19.5 3.8" stroke-dashoffset="-12"/><path d="M63.6 29h3.600" stroke="#1c2ca0" stroke-width="0.800"/><text x="66.1" y="31" font-size="5" fill="#2a34a8" font-family="Liberation Sans,sans-serif">Y</text><path d="M63.2 25.200l2.600.400-1.600 1.800z" fill="#e02020"/><circle cx="80.6" cy="29" r="3.700" fill="none" stroke="#e8503e" stroke-width="0.650" stroke-dasharray="19.5 3.8" stroke-dashoffset="-12"/><path d="M77.19999999999999 29h3.600" stroke="#1c2ca0" stroke-width="0.800"/><text x="79.69999999999999" y="31" font-size="5" fill="#2a34a8" font-family="Liberation Sans,sans-serif">Y</text><path d="M84.39999999999999 25.200l-2.600.400 1.600 1.800z" fill="#e02020"/><circle cx="94" cy="29" r="3.700" fill="none" stroke="#e8503e" stroke-width="0.650" stroke-dasharray="19.5 3.8" stroke-dashoffset="-12"/><path d="M90.6 29h3.600" stroke="#1c2ca0" stroke-width="0.800"/><text x="93.1" y="31" font-size="5" fill="#2a34a8" font-family="Liberation Sans,sans-serif">Z</text><path d="M90.2 25.200l2.600.400-1.600 1.800z" fill="#e02020"/><circle cx="107" cy="29" r="3.700" fill="none" stroke="#e8503e" stroke-width="0.650" stroke-dasharray="19.5 3.8" stroke-dashoffset="-12"/><path d="M103.6 29h3.600" stroke="#1c2ca0" stroke-width="0.800"/><text x="106.1" y="31" font-size="5" fill="#2a34a8" font-family="Liberation Sans,sans-serif">Z</text><path d="M110.8 25.200l-2.600.400 1.600 1.800z" fill="#e02020"/><text transform="translate(115.700 31.300) scale(.78 1)" font-size="7.800" font-weight="bold" fill="#4646a4" font-family="Liberation Sans,sans-serif">Iso</text><text transform="translate(128.300 31.300) scale(.78 1)" font-size="7.800" font-weight="bold" fill="#4646a4" font-family="Liberation Sans,sans-serif">Pln</text><path d="M141.2 24.5V33.5" stroke="#a8a8a8" stroke-width="0.7"/><path d="M142.0 24.5V33.5" stroke="#dedede" stroke-width="0.7"/><circle cx="148.4" cy="27.800" r="2.700" fill="#e6eefc" stroke="#6a7ab8" stroke-width="0.700"/><path d="M150.20000000000002 29.800l3.400 3" stroke="#222" stroke-width="1.300"/><path d="M147.20000000000002 27.800h2.400" stroke="#2a3aa0" stroke-width="0.700"/><path d="M148.4 26.600v2.400" stroke="#2a3aa0" stroke-width="0.700"/><circle cx="161.4" cy="27.800" r="2.700" fill="#e6eefc" stroke="#6a7ab8" stroke-width="0.700"/><path d="M163.20000000000002 29.800l3.400 3" stroke="#222" stroke-width="1.300"/><path d="M160.20000000000002 27.800h2.400" stroke="#2a3aa0" stroke-width="0.700"/><rect x="174.6" y="27.600" width="5" height="4.800" fill="#c4ccf0" stroke="#3a4ab0" stroke-width="0.500"/><circle cx="174" cy="27.800" r="2.700" fill="#e6eefc" stroke="#6a7ab8" stroke-width="0.700"/><path d="M175.8 29.800l3.400 3" stroke="#222" stroke-width="1.300"/><path d="M172.8 27.800h2.400" stroke="#2a3aa0" stroke-width="0.700"/><path d="M184 24.5V33.5" stroke="#a8a8a8" stroke-width="0.7"/><path d="M184.8 24.5V33.5" stroke="#dedede" stroke-width="0.7"/><rect x="188.800" y="25.200" width="8.600" height="7.600" rx="0.800" fill="#f6f6f6" stroke="#4a4a4a" stroke-width="0.700"/><path d="M189.600 26h2l-2 1.800zM196.600 26h-2l2 1.800zM189.600 32h2l-2-1.800zM196.600 32h-2l2-1.800z" fill="#e8402a"/><rect x="191.600" y="27.800" width="3" height="2.400" fill="#444"/><path d="M201.2 24.5V33.5" stroke="#a8a8a8" stroke-width="0.7"/><path d="M202.0 24.5V33.5" stroke="#dedede" stroke-width="0.7"/><rect x="205.400" y="24.800" width="8.200" height="8" fill="#fafafa" stroke="#444" stroke-width="0.700"/><path d="M206.800 30.800l4.800-4.600 1.200 1.200-4.800 4.600z" fill="#ecd81c" stroke="#6a6410" stroke-width="0.300"/><path d="M211.600 26.200l1-1 1.200 1.200-1 1z" fill="#d22"/><rect x="218.600" y="25" width="5.200" height="5.200" fill="#e0e0e0" stroke="#555" stroke-width="0.600"/><path d="M220.600 27.600h4.800q1.600.200 1.600 2.200v1" stroke="#25a02b" stroke-width="1.200" fill="none"/><path d="M225 31.200h4l-2 2.200z" fill="#1f7a24" transform="translate(-0.2,-0.600)"/><path d="M231.4 24.5V33.5" stroke="#a8a8a8" stroke-width="0.7"/><path d="M232.20000000000002 24.5V33.5" stroke="#dedede" stroke-width="0.7"/><path d="M234.600 24.600v9" stroke="#e8e8e8" stroke-width="0.600"/><path d="M236.400 30.600h5" stroke="#e42020" stroke-width="1"/><path d="M240.600 28.800l2.800 1.800-2.800 1.800z" fill="#e42020"/><path d="M244.200 25.400v3" stroke="#e42020" stroke-width="0.900"/><path d="M242.800 27.400h2.800l-1.400 2.200z" fill="#e42020"/><circle cx="244.200" cy="30.800" r="0.800" fill="#222"/><circle cx="315" cy="29" r="3.600" fill="none" stroke="#1a1a1a" stroke-width="1.100"/><path d="M310.400 30.600h4.400" stroke="#e42020" stroke-width="1.100"/><path d="M314 28.600l3.200-1.400-.6 3.400z" fill="#e42020"/><path d="M322.8 24.5V33.5" stroke="#a8a8a8" stroke-width="0.7"/><path d="M323.6 24.5V33.5" stroke="#dedede" stroke-width="0.7"/><path d="M327 29l3-2.200h7l-2.600 2.200z" fill="#3a7ae8" stroke="#0c1c5c" stroke-width="0.500"/><path d="M327 29h7.400l2.600-2.200v1.800l-2.600 2.600H327z" fill="#164cc0" stroke="#0c1c5c" stroke-width="0.500"/><text x="343" y="32.200" font-size="7.400" font-weight="bold" fill="#2fd044" font-family="Liberation Sans,sans-serif">N</text><circle cx="342" cy="26.200" r="0.700" fill="#2fd044"/><text x="355" y="30.600" font-size="6.400" font-weight="bold" fill="#1a1a1a" font-family="Liberation Sans,sans-serif">M</text><path d="M353.800 31.800h8.600" stroke="#1a1a1a" stroke-width="0.600"/><circle cx="354" cy="31.800" r="0.700" fill="#1a1a1a"/><circle cx="362.400" cy="31.800" r="0.700" fill="#1a1a1a"/><text x="368" y="30.400" font-size="6.400" font-weight="bold" fill="#2430b0" font-family="Liberation Sans,sans-serif">M</text><path d="M366.200 31.600h2.400" stroke="#d22" stroke-width="1"/><path d="M368.600 31.600h2.400" stroke="#d8c020" stroke-width="1"/><path d="M371 31.600h2" stroke="#4a8ae0" stroke-width="1"/><path d="M373 31.600h2" stroke="#c8c8c8" stroke-width="1"/><path d="M379.6 28.2h3.8l-1.9 2.2z" fill="#1a1a1a"/><rect x="387.400" y="25.400" width="8.400" height="7.600" fill="#2a7ae0" stroke="#4ac8e0" stroke-width="0.500"/><path d="M387.400 25.400h8.400l-8.400 7.600z" fill="#e82a1c"/><path d="M395.800 25.400l-8.400 7.600" stroke="#5a2a6a" stroke-width="0.600"/><circle cx="387.400" cy="25.400" r="0.800" fill="#111"/><circle cx="395.800" cy="25.400" r="0.800" fill="#111"/><circle cx="387.400" cy="33" r="0.800" fill="#111"/><circle cx="395.800" cy="33" r="0.800" fill="#111"/><path d="M400.4 28.2h3.8l-1.9 2.2z" fill="#1a1a1a"/><rect x="407.400" y="26.200" width="9.400" height="5.800" rx="0.800" fill="#3a3ab0"/><rect x="411" y="26.800" width="2" height="4.600" fill="#e8e8f8"/><path d="M409.200 26.400v5.400M415 26.400v5.400" stroke="#1c1c6a" stroke-width="0.600"/><path d="M421.4 28.2h3.8l-1.9 2.2z" fill="#1a1a1a"/><rect x="428.800" y="27.400" width="8.400" height="1.800" fill="#1c9ae8"/><rect x="431.400" y="25.200" width="3.200" height="2.400" fill="#2a6ae0"/><path d="M430.400 29.200v2.800M433 29.200v2.800M435.600 29.200v2.800" stroke="#2ad0f0" stroke-width="1.100"/><path d="M442.2 28.2h3.8l-1.9 2.2z" fill="#1a1a1a"/><path d="M449.600 29.400l3.600-3.800h6.400l-3.400 3.800z" fill="#3ac4e8"/><path d="M449.600 29.400h6.600l3.400-3.800v2l-3.400 4h-6.600z" fill="#8a7a2a"/><path d="M449.600 31.200h6.600" stroke="#3aa04a" stroke-width="0.500"/><path d="M463.2 28.2h3.8l-1.9 2.2z" fill="#1a1a1a"/><path d="M473.400 26h3.400v3.400l1.600 1v2.400h-6.600v-2.400l1.600-1z" fill="#1a7a80"/><path d="M476.800 27l3 2.600-3 .8z" fill="#e0c82a"/><path d="M484.2 28.2h3.8l-1.9 2.2z" fill="#1a1a1a"/><path d="M491.600 32l5.600-5.600M494.800 32.200l5.400-5.800" stroke="#8a8a8a" stroke-width="0.700"/><path d="M493.400 26.400h6.800" stroke="#9a9a9a" stroke-width="0.500"/><path d="M491.400 32.200l1.800-1.800M494.600 32.400l1.800-1.800" stroke="#3ab04a" stroke-width="1"/><path d="M504.6 28.2h3.8l-1.9 2.2z" fill="#1a1a1a"/><path d="M512.800 25.200v7.400M520 25.200v7.400" stroke="#2a2a2a" stroke-width="0.800"/><path d="M514 30l1.400-1.600 1.200 1 1.400-2.400 1 2.600" stroke="#3a6ad0" stroke-width="0.700" fill="none"/></g>
<g><defs><linearGradient id="lg" x1="0" y1="0" x2="1" y2="0"><stop offset="0" stop-color="#c3c3c3"/><stop offset="1" stop-color="#8a8a8a"/></linearGradient></defs><rect x="14.400" y="38.400" width="1.800" height="380" fill="url(#lg)"/><rect x="16.100" y="39.600" width="1.000" height="379" fill="#5c6068"/><g transform="translate(0 0.6)"><path d="M3.600 46.800v-6.600h7v6.600M3.600 43.600h7" stroke="#1a1a1a" stroke-width="1.200" fill="none"/><rect x="3.400" y="51.800" width="7.400" height="7" fill="none" stroke="#e8301c" stroke-width="1.100"/><rect x="5.400" y="53.800" width="3.400" height="3" fill="#1a1a1a"/><path d="M4.600 63.800h5.800v4.400l-2.200 2.800h-2.600l-2.200-2.600v-3.400z" fill="none" stroke="#e8301c" stroke-width="1.100"/><path d="M6.600 66.200h2.800v2.600" stroke="#1a1a1a" stroke-width="1" fill="none"/><path d="M3.600 82l2.600-3h2l2.400-3" stroke="#d8201c" stroke-width="1.100" fill="none"/><rect x="5.400" y="77.800" width="3" height="2.200" fill="#1a1a1a"/></g><path d="M2 87.200h11.600" stroke="#e2e2e2" stroke-width="0.600"/><path d="M2 86.600h11.600" stroke="#a6a6a6" stroke-width="0.600"/><path d="M3.600 99v-7h7v7M3.600 95.400h7" stroke="#e6e6e6" stroke-width="1.200" fill="none"/><path d="M3 99v-7.600h8.200" stroke="#a8a8a8" stroke-width="0.400" fill="none"/><rect x="3.400" y="104" width="7.400" height="7" fill="none" stroke="#e8301c" stroke-width="1.100"/><rect x="5.400" y="106.000" width="3.400" height="3.000" fill="#f4f4f4" stroke="#8a8a8a" stroke-width="0.400"/><path d="M4.600 116h5.800v4.400l-2.200 2.800h-2.600l-2.200-2.600v-3.400z" fill="none" stroke="#e8301c" stroke-width="1.100"/><path d="M6.600 118.400h2.800v2.400" stroke="#fff" stroke-width="1" fill="none"/><path d="M3.800 133.600l6.400-5.800" stroke="#e8301c" stroke-width="1.100"/><path d="M2 138.400h11.600" stroke="#e2e2e2" stroke-width="0.600"/><path d="M2 137.800h11.600" stroke="#a6a6a6" stroke-width="0.600"/><rect x="3.000" y="143.800" width="1.000" height="7.200" fill="#222"/><rect x="9.000" y="143.800" width="1.600" height="7.200" fill="#ececec"/><path d="M4.600 145.800h4M4.600 148.800h4" stroke="#e0281c" stroke-width="1.300" stroke-dasharray="1.400 0.600"/><path d="M2 156.100h11.600" stroke="#dcdcdc" stroke-width="0.600"/><rect x="8.000" y="160.200" width="2.800" height="7.200" fill="#f0f0f0"/><path d="M3.400 160.400h6.400M3.800 160.400v7" stroke="#e0281c" stroke-width="1.100" stroke-dasharray="1.500 0.700"/><path d="M5.600 162.400v5M8.200 162.400v5M5.600 164.600h2.600" stroke="#3a2222" stroke-width="0.900" fill="none"/><path d="M2 171.900h11.600" stroke="#dcdcdc" stroke-width="0.600"/><rect x="2.800" y="175.600" width="8.400" height="1.800" fill="#1a1a1a"/><path d="M5.000 178.800h3.600q2.400 .400 2.000 3.400" stroke="#2aa83a" stroke-width="1.700" fill="none"/><path d="M8.400 182.600h4l-2 2.200z" fill="#1f7a2a"/><rect x="3.000" y="179.600" width="3.400" height="4.600" fill="#f2f2f2"/><path d="M11.200 177.400v3" stroke="#1a1a1a" stroke-width="0.800"/><path d="M2 186.400h11.600" stroke="#dcdcdc" stroke-width="0.600"/><rect x="3.800" y="193.400" width="6.200" height="6.200" fill="#1c1c96"/><path d="M6.400 193.400v-2.200q1.600-2.600 3.400-.400v1.600" stroke="#1c1c96" stroke-width="1.100" fill="none"/><rect x="5.400" y="196.400" width="3" height="1" fill="#e8e8f8"/><rect x="2.600" y="290.400" width="10.800" height="33.400" fill="#f0f0f0" stroke="#5a5a5a" stroke-width="0.600"/><text transform="translate(10.900,314.000) rotate(-90)" font-size="6.800" font-weight="bold" fill="#1c2470" font-family="Liberation Sans,sans-serif" textLength="22.600" lengthAdjust="spacingAndGlyphs">DesignStep</text><rect x="5.000" y="315.000" width="2.600" height="3.600" fill="#e8c81c" stroke="#7a2a1c" stroke-width="0.500"/><rect x="5.200" y="318.600" width="2.200" height="1.800" fill="#c8201c"/><rect x="2.600" y="327.600" width="10.800" height="17.600" fill="#ececec" stroke="#6a6a6a" stroke-width="0.600"/><path d="M4.800 332l6.400 9M11 331.400l-6 9.800" stroke="#8a8a92" stroke-width="0.900"/><path d="M5 331.800l2 1.200M9.400 339.400l1.800 1.800" stroke="#4a6ab0" stroke-width="0.900"/></g>
<circle cx="25.800" cy="47.200" r="4" fill="#1c5cc8"/><circle cx="25.800" cy="47.200" r="3.400" fill="none" stroke="#6aa6f0" stroke-width="0.500"/><text x="23.100" y="49" font-size="4.600" font-weight="bold" fill="#e8f0ff" font-family="Liberation Sans,sans-serif">fo</text></svg>
<div id="combo" class="abs"><span>DL - Dead Load</span></div><div id="combobtn" class="abs"></div>
<svg width="800" height="418" viewBox="0 0 800 418"><path d="M301.2 28.6h3.6l-1.8 2.2z" fill="#222"/></svg>
<div id="dd" class="abs"><div class="it" style="top:0.85px">NLZ - Notional Load Z</div><div class="it" style="top:8.62px">WLX+R - Wind Load Roof +X</div><div class="it" style="top:16.40px">WLY+R - Wind Load Roof +Y</div><div class="it" style="top:24.18px">WLZ+R - Wind Load Roof +Z</div><div class="it" style="top:31.95px">WLX-R - Wind Load Roof -X</div><div class="it" style="top:39.72px">WLY-R - Wind Load Roof -Y</div><div class="it" style="top:47.50px">WLZ-R - Wind Load Roof -Z</div><div class="it sel" style="top:55.28px">SX - X Direction Response Spectra</div><div class="it" style="top:63.05px">SY - Y Direction Response Spectra</div><div class="it" style="top:70.83px">SZ - Z Direction Response Spectra</div><div class="it" style="top:78.60px">OL1 - Other Load 1</div><div class="it" style="top:86.38px">OL2 - Other Load 2</div><div class="it" style="top:94.15px">OL3 - Other Load 3</div><div class="it" style="top:101.92px">OL4 - Other Load 4</div></div>
<div id="ddsb" class="abs"></div><div id="ddth" class="abs"></div>
<svg width="800" height="418" viewBox="0 0 800 418"><path d="M468.8 41.4l2.1-2.2 2.1 2.2M468.8 139.4l2.1 2.2 2.1-2.2" stroke="#4a4a4a" stroke-width="1.25" fill="none"/><path d="M283.6 94.4v6.4l1.5-1.4 1 2.2 0.9-0.4-1-2.2h2z" fill="#fff" stroke="#222" stroke-width="0.5"/></svg>
<div id="deshadow" class="abs"></div><div id="de" class="abs"><span>Data Entry</span></div><div id="declose" class="abs"></div>
<svg width="800" height="418" viewBox="0 0 800 418"><defs><linearGradient id="bg" x1="0" y1="0" x2="0" y2="1"><stop offset="0" stop-color="#f8f8f8"/><stop offset="1" stop-color="#eaeaea"/></linearGradient></defs><rect x="722.4" y="49.0" width="71" height="167.5" fill="#747474"/><rect x="723.2" y="50.20" width="70.2" height="7.55" fill="url(#bg)"/><rect x="723.2" y="58.52" width="70.2" height="7.55" fill="url(#bg)"/><rect x="723.2" y="66.84" width="70.2" height="7.55" fill="url(#bg)"/><rect x="723.2" y="75.16" width="70.2" height="7.55" fill="url(#bg)"/><rect x="723.2" y="83.48" width="70.2" height="7.55" fill="url(#bg)"/><rect x="723.2" y="91.80" width="70.2" height="7.55" fill="url(#bg)"/><rect x="723.2" y="100.12" width="70.2" height="7.55" fill="url(#bg)"/><rect x="723.2" y="108.44" width="70.2" height="7.55" fill="url(#bg)"/><rect x="723.2" y="116.76" width="70.2" height="7.55" fill="url(#bg)"/><rect x="723.2" y="125.08" width="70.2" height="7.55" fill="url(#bg)"/><rect x="723.2" y="133.40" width="70.2" height="7.55" fill="url(#bg)"/><rect x="723.2" y="141.72" width="70.2" height="7.55" fill="url(#bg)"/><rect x="723.2" y="150.04" width="70.2" height="7.55" fill="url(#bg)"/><rect x="723.2" y="158.36" width="70.2" height="7.55" fill="url(#bg)"/><rect x="723.2" y="166.68" width="70.2" height="7.55" fill="url(#bg)"/><rect x="723.2" y="175.00" width="70.2" height="7.55" fill="url(#bg)"/><rect x="723.2" y="183.32" width="70.2" height="7.55" fill="url(#bg)"/><rect x="723.2" y="191.64" width="70.2" height="7.55" fill="url(#bg)"/><rect x="723.2" y="199.96" width="70.2" height="7.55" fill="url(#bg)"/><rect x="723.2" y="208.28" width="70.2" height="7.55" fill="url(#bg)"/></svg>
<div id="debtns" class="abs"><div style="top:0.70px">Project Grid</div><div style="top:9.02px">Materials</div><div style="top:17.34px">Design Rules</div><div style="top:25.66px">Footing Definitions</div><div style="top:33.98px">Pile Definitions</div><div style="top:42.30px">Pile Cap Definitions</div><div style="top:50.62px">Wall Footing Definitions</div><div style="top:58.94px">Point Coordinates</div><div style="top:67.26px">Soil Definitions</div><div style="top:75.58px">All Support Types</div><div style="top:83.90px">Beams</div><div style="top:92.22px">Pedestals/Stem Walls</div><div style="top:100.54px">Load Categories</div><div style="top:108.86px">Point Loads</div><div style="top:117.18px">Line Loads</div><div style="top:125.50px">Area Loads</div><div style="top:133.82px">Slabs</div><div style="top:142.14px">Wall Footings</div><div style="top:150.46px">Load Combinations</div><div style="top:158.78px">Design Strips/Cuts</div></div>
<svg width="800" height="418" viewBox="0 0 800 418"><path d="M785 39.4l4 4M789 39.4l-4 4" stroke="#eee" stroke-width="0.7"/><path d="M786 400.8l2.2 2.2 2.2-2.2" stroke="#3c3c3c" stroke-width="1.25" fill="none"/><path d="M778.6 408.8l2.2 2.2-2.2 2.2" stroke="#3c3c3c" stroke-width="1.25" fill="none"/><path d="M28 408.8l-2.2 2.2 2.2 2.2" stroke="#3c3c3c" stroke-width="1.25" fill="none"/><path d="M791.4 409.6v4.4h-4.4z" fill="#d4d4d4"/></svg>
</div>
</body></html>
